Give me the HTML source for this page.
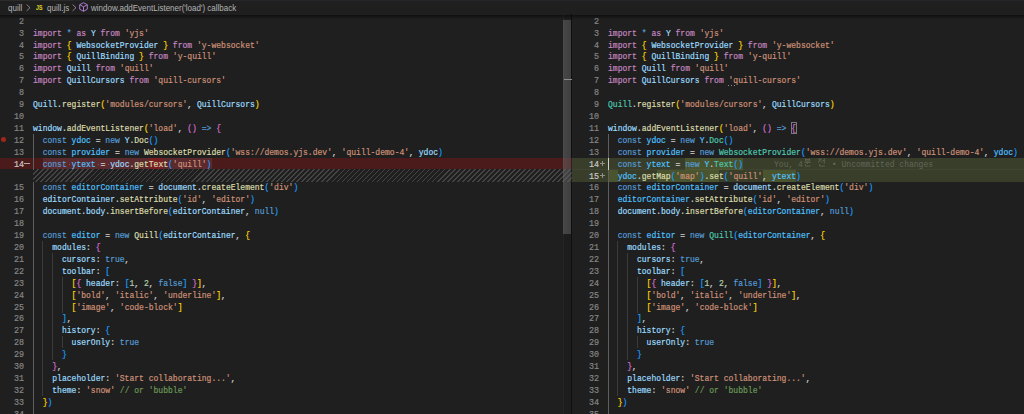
<!DOCTYPE html>
<html><head><meta charset="utf-8"><style>
html,body{margin:0;padding:0;}
body{width:1024px;height:414px;overflow:hidden;background:#1f1f1f;position:relative;font-family:"Liberation Mono",monospace;}
.a{position:absolute;}
.ln{position:absolute;white-space:pre;font-size:9.0px;line-height:11.91px;height:11.91px;transform-origin:0 0;margin-top:1.8px;-webkit-text-stroke:0.2px currentColor;}
.num{position:absolute;white-space:pre;font-size:9.0px;line-height:11.91px;color:#858585;text-align:right;width:30px;transform-origin:100% 0;transform:scaleX(0.93);margin-top:1.8px;-webkit-text-stroke:0.2px currentColor;}

.k{color:#c586c0}
.b{color:#569cd6}
.v{color:#9cdcfe}
.c{color:#4fc1ff}
.f{color:#dcdcaa}
.s{color:#ce9178}
.t{color:#4ec9b0}
.n{color:#b5cea8}
.o{color:#d4d4d4}
.g{color:#ffd700}
.p{color:#da70d6}
.u{color:#179fff}
.m{color:#6a9955}

.hatch{background-image:repeating-linear-gradient(-45deg,#1f1f1f 0px,#1f1f1f 2.45px,#444444 2.45px,#444444 3.55px);}
</style></head><body>

<div class="a" style="left:0;top:157.82px;width:572px;height:11.10px;background:#4b1a1a"></div>
<div class="a" style="left:42.94px;top:157.82px;width:168.70px;height:11.10px;background:#5a2a2e"></div>
<div class="a" style="left:148.98px;top:157.82px;width:14.46px;height:11.10px;background:#7a1e22"></div>
<div class="a hatch" style="left:33px;top:168.92px;width:539px;height:12.72px"></div>
<div class="a" style="left:572px;top:157.82px;width:452px;height:23.82px;background:#383e2a"></div>
<div class="a" style="left:685.42px;top:157.82px;width:57.84px;height:11.91px;background:#4a5530"></div>
<div class="a" style="left:608.30px;top:169.73px;width:9.64px;height:11.91px;background:#4a5530"></div>
<div class="a" style="left:656.50px;top:169.73px;width:62.66px;height:11.91px;background:#4a5530"></div>
<div class="a" style="left:762.54px;top:169.73px;width:33.74px;height:11.91px;background:#4a5530"></div>
<div class="a" style="left:572px;top:168.5px;width:452px;height:0.7px;background:rgba(255,255,255,0.04)"></div>
<div class="a" style="left:69.04px;top:164.22px;width:1px;height:1px;background:#7c5c60"></div>
<div class="a" style="left:97.96px;top:164.22px;width:1px;height:1px;background:#7c5c60"></div>
<div class="a" style="left:107.60px;top:164.22px;width:1px;height:1px;background:#7c5c60"></div>
<div class="a" style="left:0px;top:14px;width:563px;height:400px;overflow:hidden">
<div class="num" style="left:-6.00px;top:0.90px">2</div>
<div class="num" style="left:-6.00px;top:12.81px">3</div>
<div class="ln" style="left:33.30px;top:12.81px;transform:scaleX(0.8926)"><span class="k">import</span><span class="o"> </span><span class="b">*</span><span class="o"> </span><span class="k">as</span><span class="o"> </span><span class="v">Y</span><span class="o"> </span><span class="k">from</span><span class="o"> </span><span class="s">&#x27;yjs&#x27;</span></div>
<div class="num" style="left:-6.00px;top:24.72px">4</div>
<div class="ln" style="left:33.30px;top:24.72px;transform:scaleX(0.8926)"><span class="k">import</span><span class="o"> </span><span class="g">{</span><span class="o"> </span><span class="v">WebsocketProvider</span><span class="o"> </span><span class="g">}</span><span class="o"> </span><span class="k">from</span><span class="o"> </span><span class="s">&#x27;y-websocket&#x27;</span></div>
<div class="num" style="left:-6.00px;top:36.63px">5</div>
<div class="ln" style="left:33.30px;top:36.63px;transform:scaleX(0.8926)"><span class="k">import</span><span class="o"> </span><span class="g">{</span><span class="o"> </span><span class="v">QuillBinding</span><span class="o"> </span><span class="g">}</span><span class="o"> </span><span class="k">from</span><span class="o"> </span><span class="s">&#x27;y-quill&#x27;</span></div>
<div class="num" style="left:-6.00px;top:48.54px">6</div>
<div class="ln" style="left:33.30px;top:48.54px;transform:scaleX(0.8926)"><span class="k">import</span><span class="o"> </span><span class="v">Quill</span><span class="o"> </span><span class="k">from</span><span class="o"> </span><span class="s">&#x27;quill&#x27;</span></div>
<div class="num" style="left:-6.00px;top:60.45px">7</div>
<div class="ln" style="left:33.30px;top:60.45px;transform:scaleX(0.8926)"><span class="k">import</span><span class="o"> </span><span class="v">QuillCursors</span><span class="o"> </span><span class="k">from</span><span class="o"> </span><span class="s">&#x27;quill-cursors&#x27;</span></div>
<div class="num" style="left:-6.00px;top:72.36px">8</div>
<div class="num" style="left:-6.00px;top:84.27px">9</div>
<div class="ln" style="left:33.30px;top:84.27px;transform:scaleX(0.8926)"><span class="v">Quill</span><span class="o">.</span><span class="f">register</span><span class="g">(</span><span class="s">&#x27;modules/cursors&#x27;</span><span class="o">, </span><span class="v">QuillCursors</span><span class="g">)</span></div>
<div class="num" style="left:-6.00px;top:96.18px">10</div>
<div class="num" style="left:-6.00px;top:108.09px">11</div>
<div class="ln" style="left:33.30px;top:108.09px;transform:scaleX(0.8926)"><span class="v">window</span><span class="o">.</span><span class="f">addEventListener</span><span class="g">(</span><span class="s">&#x27;load&#x27;</span><span class="o">, </span><span class="p">()</span><span class="o"> </span><span class="b">=&gt;</span><span class="o"> </span><span class="p">{</span></div>
<div class="a" style="left:33.00px;top:120.00px;width:1px;height:11.96px;background:#5e5e5e"></div>
<div class="num" style="left:-6.00px;top:120.00px">12</div>
<div class="ln" style="left:33.30px;top:120.00px;transform:scaleX(0.8926)"><span class="o">  </span><span class="b">const</span><span class="o"> </span><span class="c">ydoc</span><span class="o"> = </span><span class="b">new</span><span class="o"> </span><span class="v">Y</span><span class="o">.</span><span class="f">Doc</span><span class="u">()</span></div>
<div class="a" style="left:33.00px;top:131.91px;width:1px;height:11.96px;background:#5e5e5e"></div>
<div class="num" style="left:-6.00px;top:131.91px">13</div>
<div class="ln" style="left:33.30px;top:131.91px;transform:scaleX(0.8926)"><span class="o">  </span><span class="b">const</span><span class="o"> </span><span class="c">provider</span><span class="o"> = </span><span class="b">new</span><span class="o"> </span><span class="f">WebsocketProvider</span><span class="u">(</span><span class="s">&#x27;wss://demos.yjs.dev&#x27;</span><span class="o">, </span><span class="s">&#x27;quill-demo-4&#x27;</span><span class="o">, </span><span class="v">ydoc</span><span class="u">)</span></div>
<div class="a" style="left:33.00px;top:143.82px;width:1px;height:11.96px;background:#5e5e5e"></div>
<div class="num" style="left:-6.00px;top:143.82px;color:#c8c8c8">14</div>
<div class="ln" style="left:33.30px;top:143.82px;transform:scaleX(0.8926)"><span class="o">  </span><span class="b">const</span><span class="o"> </span><span class="c">ytext</span><span class="o"> = </span><span class="v">ydoc</span><span class="o">.</span><span class="f">getText</span><span class="u">(</span><span class="s">&#x27;quill&#x27;</span><span class="u">)</span></div>
<div class="a" style="left:33.00px;top:167.64px;width:1px;height:11.96px;background:#5e5e5e"></div>
<div class="num" style="left:-6.00px;top:167.64px">15</div>
<div class="ln" style="left:33.30px;top:167.64px;transform:scaleX(0.8926)"><span class="o">  </span><span class="b">const</span><span class="o"> </span><span class="c">editorContainer</span><span class="o"> = </span><span class="v">document</span><span class="o">.</span><span class="f">createElement</span><span class="u">(</span><span class="s">&#x27;div&#x27;</span><span class="u">)</span></div>
<div class="a" style="left:33.00px;top:179.55px;width:1px;height:11.96px;background:#5e5e5e"></div>
<div class="num" style="left:-6.00px;top:179.55px">16</div>
<div class="ln" style="left:33.30px;top:179.55px;transform:scaleX(0.8926)"><span class="o">  </span><span class="v">editorContainer</span><span class="o">.</span><span class="f">setAttribute</span><span class="u">(</span><span class="s">&#x27;id&#x27;</span><span class="o">, </span><span class="s">&#x27;editor&#x27;</span><span class="u">)</span></div>
<div class="a" style="left:33.00px;top:191.46px;width:1px;height:11.96px;background:#5e5e5e"></div>
<div class="num" style="left:-6.00px;top:191.46px">17</div>
<div class="ln" style="left:33.30px;top:191.46px;transform:scaleX(0.8926)"><span class="o">  </span><span class="v">document</span><span class="o">.</span><span class="v">body</span><span class="o">.</span><span class="f">insertBefore</span><span class="u">(</span><span class="v">editorContainer</span><span class="o">, </span><span class="b">null</span><span class="u">)</span></div>
<div class="a" style="left:33.00px;top:203.37px;width:1px;height:11.96px;background:#5e5e5e"></div>
<div class="num" style="left:-6.00px;top:203.37px">18</div>
<div class="a" style="left:33.00px;top:215.28px;width:1px;height:11.96px;background:#5e5e5e"></div>
<div class="num" style="left:-6.00px;top:215.28px">19</div>
<div class="ln" style="left:33.30px;top:215.28px;transform:scaleX(0.8926)"><span class="o">  </span><span class="b">const</span><span class="o"> </span><span class="c">editor</span><span class="o"> = </span><span class="b">new</span><span class="o"> </span><span class="f">Quill</span><span class="u">(</span><span class="v">editorContainer</span><span class="o">, </span><span class="g">{</span></div>
<div class="a" style="left:33.00px;top:227.19px;width:1px;height:11.96px;background:#5e5e5e"></div>
<div class="a" style="left:42.00px;top:227.19px;width:1px;height:11.96px;background:#3b3b3b"></div>
<div class="num" style="left:-6.00px;top:227.19px">20</div>
<div class="ln" style="left:33.30px;top:227.19px;transform:scaleX(0.8926)"><span class="o">    </span><span class="v">modules</span><span class="o">: </span><span class="p">{</span></div>
<div class="a" style="left:33.00px;top:239.10px;width:1px;height:11.96px;background:#5e5e5e"></div>
<div class="a" style="left:42.00px;top:239.10px;width:1px;height:11.96px;background:#3b3b3b"></div>
<div class="a" style="left:52.00px;top:239.10px;width:1px;height:11.96px;background:#3b3b3b"></div>
<div class="num" style="left:-6.00px;top:239.10px">21</div>
<div class="ln" style="left:33.30px;top:239.10px;transform:scaleX(0.8926)"><span class="o">      </span><span class="v">cursors</span><span class="o">: </span><span class="b">true</span><span class="o">,</span></div>
<div class="a" style="left:33.00px;top:251.01px;width:1px;height:11.96px;background:#5e5e5e"></div>
<div class="a" style="left:42.00px;top:251.01px;width:1px;height:11.96px;background:#3b3b3b"></div>
<div class="a" style="left:52.00px;top:251.01px;width:1px;height:11.96px;background:#3b3b3b"></div>
<div class="num" style="left:-6.00px;top:251.01px">22</div>
<div class="ln" style="left:33.30px;top:251.01px;transform:scaleX(0.8926)"><span class="o">      </span><span class="v">toolbar</span><span class="o">: </span><span class="u">[</span></div>
<div class="a" style="left:33.00px;top:262.92px;width:1px;height:11.96px;background:#5e5e5e"></div>
<div class="a" style="left:42.00px;top:262.92px;width:1px;height:11.96px;background:#3b3b3b"></div>
<div class="a" style="left:52.00px;top:262.92px;width:1px;height:11.96px;background:#3b3b3b"></div>
<div class="a" style="left:62.00px;top:262.92px;width:1px;height:11.96px;background:#3b3b3b"></div>
<div class="num" style="left:-6.00px;top:262.92px">23</div>
<div class="ln" style="left:33.30px;top:262.92px;transform:scaleX(0.8926)"><span class="o">        </span><span class="g">[</span><span class="p">{</span><span class="o"> </span><span class="v">header</span><span class="o">: </span><span class="u">[</span><span class="n">1</span><span class="o">, </span><span class="n">2</span><span class="o">, </span><span class="b">false</span><span class="u">]</span><span class="o"> </span><span class="p">}</span><span class="g">]</span><span class="o">,</span></div>
<div class="a" style="left:33.00px;top:274.83px;width:1px;height:11.96px;background:#5e5e5e"></div>
<div class="a" style="left:42.00px;top:274.83px;width:1px;height:11.96px;background:#3b3b3b"></div>
<div class="a" style="left:52.00px;top:274.83px;width:1px;height:11.96px;background:#3b3b3b"></div>
<div class="a" style="left:62.00px;top:274.83px;width:1px;height:11.96px;background:#3b3b3b"></div>
<div class="num" style="left:-6.00px;top:274.83px">24</div>
<div class="ln" style="left:33.30px;top:274.83px;transform:scaleX(0.8926)"><span class="o">        </span><span class="g">[</span><span class="s">&#x27;bold&#x27;</span><span class="o">, </span><span class="s">&#x27;italic&#x27;</span><span class="o">, </span><span class="s">&#x27;underline&#x27;</span><span class="g">]</span><span class="o">,</span></div>
<div class="a" style="left:33.00px;top:286.74px;width:1px;height:11.96px;background:#5e5e5e"></div>
<div class="a" style="left:42.00px;top:286.74px;width:1px;height:11.96px;background:#3b3b3b"></div>
<div class="a" style="left:52.00px;top:286.74px;width:1px;height:11.96px;background:#3b3b3b"></div>
<div class="a" style="left:62.00px;top:286.74px;width:1px;height:11.96px;background:#3b3b3b"></div>
<div class="num" style="left:-6.00px;top:286.74px">25</div>
<div class="ln" style="left:33.30px;top:286.74px;transform:scaleX(0.8926)"><span class="o">        </span><span class="g">[</span><span class="s">&#x27;image&#x27;</span><span class="o">, </span><span class="s">&#x27;code-block&#x27;</span><span class="g">]</span></div>
<div class="a" style="left:33.00px;top:298.65px;width:1px;height:11.96px;background:#5e5e5e"></div>
<div class="a" style="left:42.00px;top:298.65px;width:1px;height:11.96px;background:#3b3b3b"></div>
<div class="a" style="left:52.00px;top:298.65px;width:1px;height:11.96px;background:#3b3b3b"></div>
<div class="num" style="left:-6.00px;top:298.65px">26</div>
<div class="ln" style="left:33.30px;top:298.65px;transform:scaleX(0.8926)"><span class="o">      </span><span class="u">]</span><span class="o">,</span></div>
<div class="a" style="left:33.00px;top:310.56px;width:1px;height:11.96px;background:#5e5e5e"></div>
<div class="a" style="left:42.00px;top:310.56px;width:1px;height:11.96px;background:#3b3b3b"></div>
<div class="a" style="left:52.00px;top:310.56px;width:1px;height:11.96px;background:#3b3b3b"></div>
<div class="num" style="left:-6.00px;top:310.56px">27</div>
<div class="ln" style="left:33.30px;top:310.56px;transform:scaleX(0.8926)"><span class="o">      </span><span class="v">history</span><span class="o">: </span><span class="u">{</span></div>
<div class="a" style="left:33.00px;top:322.47px;width:1px;height:11.96px;background:#5e5e5e"></div>
<div class="a" style="left:42.00px;top:322.47px;width:1px;height:11.96px;background:#3b3b3b"></div>
<div class="a" style="left:52.00px;top:322.47px;width:1px;height:11.96px;background:#3b3b3b"></div>
<div class="a" style="left:62.00px;top:322.47px;width:1px;height:11.96px;background:#3b3b3b"></div>
<div class="num" style="left:-6.00px;top:322.47px">28</div>
<div class="ln" style="left:33.30px;top:322.47px;transform:scaleX(0.8926)"><span class="o">        </span><span class="v">userOnly</span><span class="o">: </span><span class="b">true</span></div>
<div class="a" style="left:33.00px;top:334.38px;width:1px;height:11.96px;background:#5e5e5e"></div>
<div class="a" style="left:42.00px;top:334.38px;width:1px;height:11.96px;background:#3b3b3b"></div>
<div class="a" style="left:52.00px;top:334.38px;width:1px;height:11.96px;background:#3b3b3b"></div>
<div class="num" style="left:-6.00px;top:334.38px">29</div>
<div class="ln" style="left:33.30px;top:334.38px;transform:scaleX(0.8926)"><span class="o">      </span><span class="u">}</span></div>
<div class="a" style="left:33.00px;top:346.29px;width:1px;height:11.96px;background:#5e5e5e"></div>
<div class="a" style="left:42.00px;top:346.29px;width:1px;height:11.96px;background:#3b3b3b"></div>
<div class="num" style="left:-6.00px;top:346.29px">30</div>
<div class="ln" style="left:33.30px;top:346.29px;transform:scaleX(0.8926)"><span class="o">    </span><span class="p">}</span><span class="o">,</span></div>
<div class="a" style="left:33.00px;top:358.20px;width:1px;height:11.96px;background:#5e5e5e"></div>
<div class="a" style="left:42.00px;top:358.20px;width:1px;height:11.96px;background:#3b3b3b"></div>
<div class="num" style="left:-6.00px;top:358.20px">31</div>
<div class="ln" style="left:33.30px;top:358.20px;transform:scaleX(0.8926)"><span class="o">    </span><span class="v">placeholder</span><span class="o">: </span><span class="s">&#x27;Start collaborating...&#x27;</span><span class="o">,</span></div>
<div class="a" style="left:33.00px;top:370.11px;width:1px;height:11.96px;background:#5e5e5e"></div>
<div class="a" style="left:42.00px;top:370.11px;width:1px;height:11.96px;background:#3b3b3b"></div>
<div class="num" style="left:-6.00px;top:370.11px">32</div>
<div class="ln" style="left:33.30px;top:370.11px;transform:scaleX(0.8926)"><span class="o">    </span><span class="v">theme</span><span class="o">: </span><span class="s">&#x27;snow&#x27;</span><span class="o"> </span><span class="m">// or &#x27;bubble&#x27;</span></div>
<div class="a" style="left:33.00px;top:382.02px;width:1px;height:11.96px;background:#5e5e5e"></div>
<div class="num" style="left:-6.00px;top:382.02px">33</div>
<div class="ln" style="left:33.30px;top:382.02px;transform:scaleX(0.8926)"><span class="o">  </span><span class="g">}</span><span class="u">)</span></div>
<div class="a" style="left:33.00px;top:393.93px;width:1px;height:11.96px;background:#5e5e5e"></div>
<div class="num" style="left:-6.00px;top:393.93px">34</div>
<div class="a" style="left:33.00px;top:405.84px;width:1px;height:11.96px;background:#5e5e5e"></div>
<div class="num" style="left:-6.00px;top:405.84px">35</div>
<div class="ln" style="left:33.30px;top:405.84px;transform:scaleX(0.8926)"><span class="o">  </span><span class="b">new</span><span class="o"> </span><span class="f">QuillBinding</span><span class="u">(</span><span class="c">ytext</span><span class="o">, </span><span class="c">editor</span><span class="o">, </span><span class="c">provider</span><span class="o">.</span><span class="v">awareness</span><span class="u">)</span></div>
</div>
<div class="a" style="left:572px;top:14px;width:452px;height:400px;overflow:hidden">
<div class="num" style="left:-3.50px;top:0.90px">2</div>
<div class="num" style="left:-3.50px;top:12.81px">3</div>
<div class="ln" style="left:36.30px;top:12.81px;transform:scaleX(0.8926)"><span class="k">import</span><span class="o"> </span><span class="b">*</span><span class="o"> </span><span class="k">as</span><span class="o"> </span><span class="v">Y</span><span class="o"> </span><span class="k">from</span><span class="o"> </span><span class="s">&#x27;yjs&#x27;</span></div>
<div class="num" style="left:-3.50px;top:24.72px">4</div>
<div class="ln" style="left:36.30px;top:24.72px;transform:scaleX(0.8926)"><span class="k">import</span><span class="o"> </span><span class="g">{</span><span class="o"> </span><span class="v">WebsocketProvider</span><span class="o"> </span><span class="g">}</span><span class="o"> </span><span class="k">from</span><span class="o"> </span><span class="s">&#x27;y-websocket&#x27;</span></div>
<div class="num" style="left:-3.50px;top:36.63px">5</div>
<div class="ln" style="left:36.30px;top:36.63px;transform:scaleX(0.8926)"><span class="k">import</span><span class="o"> </span><span class="g">{</span><span class="o"> </span><span class="v">QuillBinding</span><span class="o"> </span><span class="g">}</span><span class="o"> </span><span class="k">from</span><span class="o"> </span><span class="s">&#x27;y-quill&#x27;</span></div>
<div class="num" style="left:-3.50px;top:48.54px">6</div>
<div class="ln" style="left:36.30px;top:48.54px;transform:scaleX(0.8926)"><span class="k">import</span><span class="o"> </span><span class="v">Quill</span><span class="o"> </span><span class="k">from</span><span class="o"> </span><span class="s">&#x27;quill&#x27;</span></div>
<div class="num" style="left:-3.50px;top:60.45px">7</div>
<div class="ln" style="left:36.30px;top:60.45px;transform:scaleX(0.8926)"><span class="k">import</span><span class="o"> </span><span class="v">QuillCursors</span><span class="o"> </span><span class="k">from</span><span class="o"> </span><span class="s">&#x27;quill-cursors&#x27;</span></div>
<div class="num" style="left:-3.50px;top:72.36px">8</div>
<div class="num" style="left:-3.50px;top:84.27px">9</div>
<div class="ln" style="left:36.30px;top:84.27px;transform:scaleX(0.8926)"><span class="t">Quill</span><span class="o">.</span><span class="f">register</span><span class="g">(</span><span class="s">&#x27;modules/cursors&#x27;</span><span class="o">, </span><span class="v">QuillCursors</span><span class="g">)</span></div>
<div class="num" style="left:-3.50px;top:96.18px">10</div>
<div class="num" style="left:-3.50px;top:108.09px">11</div>
<div class="ln" style="left:36.30px;top:108.09px;transform:scaleX(0.8926)"><span class="v">window</span><span class="o">.</span><span class="f">addEventListener</span><span class="g">(</span><span class="s">&#x27;load&#x27;</span><span class="o">, </span><span class="p">()</span><span class="o"> </span><span class="b">=&gt;</span><span class="o"> </span><span class="p">{</span></div>
<div class="a" style="left:36.00px;top:120.00px;width:1px;height:11.96px;background:#5e5e5e"></div>
<div class="num" style="left:-3.50px;top:120.00px">12</div>
<div class="ln" style="left:36.30px;top:120.00px;transform:scaleX(0.8926)"><span class="o">  </span><span class="b">const</span><span class="o"> </span><span class="c">ydoc</span><span class="o"> = </span><span class="b">new</span><span class="o"> </span><span class="c">Y</span><span class="o">.</span><span class="t">Doc</span><span class="u">()</span></div>
<div class="a" style="left:36.00px;top:131.91px;width:1px;height:11.96px;background:#5e5e5e"></div>
<div class="num" style="left:-3.50px;top:131.91px">13</div>
<div class="ln" style="left:36.30px;top:131.91px;transform:scaleX(0.8926)"><span class="o">  </span><span class="b">const</span><span class="o"> </span><span class="c">provider</span><span class="o"> = </span><span class="b">new</span><span class="o"> </span><span class="t">WebsocketProvider</span><span class="u">(</span><span class="s">&#x27;wss://demos.yjs.dev&#x27;</span><span class="o">, </span><span class="s">&#x27;quill-demo-4&#x27;</span><span class="o">, </span><span class="c">ydoc</span><span class="u">)</span></div>
<div class="a" style="left:36.00px;top:143.82px;width:1px;height:11.96px;background:#5e5e5e"></div>
<div class="num" style="left:-3.50px;top:143.82px;color:#c8c8c8">14</div>
<div class="ln" style="left:36.30px;top:143.82px;transform:scaleX(0.8926)"><span class="o">  </span><span class="b">const</span><span class="o"> </span><span class="c">ytext</span><span class="o"> = </span><span class="b">new</span><span class="o"> </span><span class="c">Y</span><span class="o">.</span><span class="t">Text</span><span class="u">()</span></div>
<div class="a" style="left:36.00px;top:155.73px;width:1px;height:11.96px;background:#5e5e5e"></div>
<div class="num" style="left:-3.50px;top:155.73px;color:#c8c8c8">15</div>
<div class="ln" style="left:36.30px;top:155.73px;transform:scaleX(0.8926)"><span class="o">  </span><span class="c">ydoc</span><span class="o">.</span><span class="f">getMap</span><span class="u">(</span><span class="s">&#x27;map&#x27;</span><span class="u">)</span><span class="o">.</span><span class="f">set</span><span class="u">(</span><span class="s">&#x27;quill&#x27;</span><span class="o">, </span><span class="c">ytext</span><span class="u">)</span></div>
<div class="a" style="left:36.00px;top:167.64px;width:1px;height:11.96px;background:#5e5e5e"></div>
<div class="num" style="left:-3.50px;top:167.64px">16</div>
<div class="ln" style="left:36.30px;top:167.64px;transform:scaleX(0.8926)"><span class="o">  </span><span class="b">const</span><span class="o"> </span><span class="c">editorContainer</span><span class="o"> = </span><span class="v">document</span><span class="o">.</span><span class="f">createElement</span><span class="u">(</span><span class="s">&#x27;div&#x27;</span><span class="u">)</span></div>
<div class="a" style="left:36.00px;top:179.55px;width:1px;height:11.96px;background:#5e5e5e"></div>
<div class="num" style="left:-3.50px;top:179.55px">17</div>
<div class="ln" style="left:36.30px;top:179.55px;transform:scaleX(0.8926)"><span class="o">  </span><span class="c">editorContainer</span><span class="o">.</span><span class="f">setAttribute</span><span class="u">(</span><span class="s">&#x27;id&#x27;</span><span class="o">, </span><span class="s">&#x27;editor&#x27;</span><span class="u">)</span></div>
<div class="a" style="left:36.00px;top:191.46px;width:1px;height:11.96px;background:#5e5e5e"></div>
<div class="num" style="left:-3.50px;top:191.46px">18</div>
<div class="ln" style="left:36.30px;top:191.46px;transform:scaleX(0.8926)"><span class="o">  </span><span class="v">document</span><span class="o">.</span><span class="v">body</span><span class="o">.</span><span class="f">insertBefore</span><span class="u">(</span><span class="c">editorContainer</span><span class="o">, </span><span class="b">null</span><span class="u">)</span></div>
<div class="a" style="left:36.00px;top:203.37px;width:1px;height:11.96px;background:#5e5e5e"></div>
<div class="num" style="left:-3.50px;top:203.37px">19</div>
<div class="a" style="left:36.00px;top:215.28px;width:1px;height:11.96px;background:#5e5e5e"></div>
<div class="num" style="left:-3.50px;top:215.28px">20</div>
<div class="ln" style="left:36.30px;top:215.28px;transform:scaleX(0.8926)"><span class="o">  </span><span class="b">const</span><span class="o"> </span><span class="c">editor</span><span class="o"> = </span><span class="b">new</span><span class="o"> </span><span class="t">Quill</span><span class="u">(</span><span class="c">editorContainer</span><span class="o">, </span><span class="g">{</span></div>
<div class="a" style="left:36.00px;top:227.19px;width:1px;height:11.96px;background:#5e5e5e"></div>
<div class="a" style="left:45.00px;top:227.19px;width:1px;height:11.96px;background:#3b3b3b"></div>
<div class="num" style="left:-3.50px;top:227.19px">21</div>
<div class="ln" style="left:36.30px;top:227.19px;transform:scaleX(0.8926)"><span class="o">    </span><span class="v">modules</span><span class="o">: </span><span class="p">{</span></div>
<div class="a" style="left:36.00px;top:239.10px;width:1px;height:11.96px;background:#5e5e5e"></div>
<div class="a" style="left:45.00px;top:239.10px;width:1px;height:11.96px;background:#3b3b3b"></div>
<div class="a" style="left:55.00px;top:239.10px;width:1px;height:11.96px;background:#3b3b3b"></div>
<div class="num" style="left:-3.50px;top:239.10px">22</div>
<div class="ln" style="left:36.30px;top:239.10px;transform:scaleX(0.8926)"><span class="o">      </span><span class="v">cursors</span><span class="o">: </span><span class="b">true</span><span class="o">,</span></div>
<div class="a" style="left:36.00px;top:251.01px;width:1px;height:11.96px;background:#5e5e5e"></div>
<div class="a" style="left:45.00px;top:251.01px;width:1px;height:11.96px;background:#3b3b3b"></div>
<div class="a" style="left:55.00px;top:251.01px;width:1px;height:11.96px;background:#3b3b3b"></div>
<div class="num" style="left:-3.50px;top:251.01px">23</div>
<div class="ln" style="left:36.30px;top:251.01px;transform:scaleX(0.8926)"><span class="o">      </span><span class="v">toolbar</span><span class="o">: </span><span class="u">[</span></div>
<div class="a" style="left:36.00px;top:262.92px;width:1px;height:11.96px;background:#5e5e5e"></div>
<div class="a" style="left:45.00px;top:262.92px;width:1px;height:11.96px;background:#3b3b3b"></div>
<div class="a" style="left:55.00px;top:262.92px;width:1px;height:11.96px;background:#3b3b3b"></div>
<div class="a" style="left:65.00px;top:262.92px;width:1px;height:11.96px;background:#3b3b3b"></div>
<div class="num" style="left:-3.50px;top:262.92px">24</div>
<div class="ln" style="left:36.30px;top:262.92px;transform:scaleX(0.8926)"><span class="o">        </span><span class="g">[</span><span class="p">{</span><span class="o"> </span><span class="v">header</span><span class="o">: </span><span class="u">[</span><span class="n">1</span><span class="o">, </span><span class="n">2</span><span class="o">, </span><span class="b">false</span><span class="u">]</span><span class="o"> </span><span class="p">}</span><span class="g">]</span><span class="o">,</span></div>
<div class="a" style="left:36.00px;top:274.83px;width:1px;height:11.96px;background:#5e5e5e"></div>
<div class="a" style="left:45.00px;top:274.83px;width:1px;height:11.96px;background:#3b3b3b"></div>
<div class="a" style="left:55.00px;top:274.83px;width:1px;height:11.96px;background:#3b3b3b"></div>
<div class="a" style="left:65.00px;top:274.83px;width:1px;height:11.96px;background:#3b3b3b"></div>
<div class="num" style="left:-3.50px;top:274.83px">25</div>
<div class="ln" style="left:36.30px;top:274.83px;transform:scaleX(0.8926)"><span class="o">        </span><span class="g">[</span><span class="s">&#x27;bold&#x27;</span><span class="o">, </span><span class="s">&#x27;italic&#x27;</span><span class="o">, </span><span class="s">&#x27;underline&#x27;</span><span class="g">]</span><span class="o">,</span></div>
<div class="a" style="left:36.00px;top:286.74px;width:1px;height:11.96px;background:#5e5e5e"></div>
<div class="a" style="left:45.00px;top:286.74px;width:1px;height:11.96px;background:#3b3b3b"></div>
<div class="a" style="left:55.00px;top:286.74px;width:1px;height:11.96px;background:#3b3b3b"></div>
<div class="a" style="left:65.00px;top:286.74px;width:1px;height:11.96px;background:#3b3b3b"></div>
<div class="num" style="left:-3.50px;top:286.74px">26</div>
<div class="ln" style="left:36.30px;top:286.74px;transform:scaleX(0.8926)"><span class="o">        </span><span class="g">[</span><span class="s">&#x27;image&#x27;</span><span class="o">, </span><span class="s">&#x27;code-block&#x27;</span><span class="g">]</span></div>
<div class="a" style="left:36.00px;top:298.65px;width:1px;height:11.96px;background:#5e5e5e"></div>
<div class="a" style="left:45.00px;top:298.65px;width:1px;height:11.96px;background:#3b3b3b"></div>
<div class="a" style="left:55.00px;top:298.65px;width:1px;height:11.96px;background:#3b3b3b"></div>
<div class="num" style="left:-3.50px;top:298.65px">27</div>
<div class="ln" style="left:36.30px;top:298.65px;transform:scaleX(0.8926)"><span class="o">      </span><span class="u">]</span><span class="o">,</span></div>
<div class="a" style="left:36.00px;top:310.56px;width:1px;height:11.96px;background:#5e5e5e"></div>
<div class="a" style="left:45.00px;top:310.56px;width:1px;height:11.96px;background:#3b3b3b"></div>
<div class="a" style="left:55.00px;top:310.56px;width:1px;height:11.96px;background:#3b3b3b"></div>
<div class="num" style="left:-3.50px;top:310.56px">28</div>
<div class="ln" style="left:36.30px;top:310.56px;transform:scaleX(0.8926)"><span class="o">      </span><span class="v">history</span><span class="o">: </span><span class="u">{</span></div>
<div class="a" style="left:36.00px;top:322.47px;width:1px;height:11.96px;background:#5e5e5e"></div>
<div class="a" style="left:45.00px;top:322.47px;width:1px;height:11.96px;background:#3b3b3b"></div>
<div class="a" style="left:55.00px;top:322.47px;width:1px;height:11.96px;background:#3b3b3b"></div>
<div class="a" style="left:65.00px;top:322.47px;width:1px;height:11.96px;background:#3b3b3b"></div>
<div class="num" style="left:-3.50px;top:322.47px">29</div>
<div class="ln" style="left:36.30px;top:322.47px;transform:scaleX(0.8926)"><span class="o">        </span><span class="v">userOnly</span><span class="o">: </span><span class="b">true</span></div>
<div class="a" style="left:36.00px;top:334.38px;width:1px;height:11.96px;background:#5e5e5e"></div>
<div class="a" style="left:45.00px;top:334.38px;width:1px;height:11.96px;background:#3b3b3b"></div>
<div class="a" style="left:55.00px;top:334.38px;width:1px;height:11.96px;background:#3b3b3b"></div>
<div class="num" style="left:-3.50px;top:334.38px">30</div>
<div class="ln" style="left:36.30px;top:334.38px;transform:scaleX(0.8926)"><span class="o">      </span><span class="u">}</span></div>
<div class="a" style="left:36.00px;top:346.29px;width:1px;height:11.96px;background:#5e5e5e"></div>
<div class="a" style="left:45.00px;top:346.29px;width:1px;height:11.96px;background:#3b3b3b"></div>
<div class="num" style="left:-3.50px;top:346.29px">31</div>
<div class="ln" style="left:36.30px;top:346.29px;transform:scaleX(0.8926)"><span class="o">    </span><span class="p">}</span><span class="o">,</span></div>
<div class="a" style="left:36.00px;top:358.20px;width:1px;height:11.96px;background:#5e5e5e"></div>
<div class="a" style="left:45.00px;top:358.20px;width:1px;height:11.96px;background:#3b3b3b"></div>
<div class="num" style="left:-3.50px;top:358.20px">32</div>
<div class="ln" style="left:36.30px;top:358.20px;transform:scaleX(0.8926)"><span class="o">    </span><span class="v">placeholder</span><span class="o">: </span><span class="s">&#x27;Start collaborating...&#x27;</span><span class="o">,</span></div>
<div class="a" style="left:36.00px;top:370.11px;width:1px;height:11.96px;background:#5e5e5e"></div>
<div class="a" style="left:45.00px;top:370.11px;width:1px;height:11.96px;background:#3b3b3b"></div>
<div class="num" style="left:-3.50px;top:370.11px">33</div>
<div class="ln" style="left:36.30px;top:370.11px;transform:scaleX(0.8926)"><span class="o">    </span><span class="v">theme</span><span class="o">: </span><span class="s">&#x27;snow&#x27;</span><span class="o"> </span><span class="m">// or &#x27;bubble&#x27;</span></div>
<div class="a" style="left:36.00px;top:382.02px;width:1px;height:11.96px;background:#5e5e5e"></div>
<div class="num" style="left:-3.50px;top:382.02px">34</div>
<div class="ln" style="left:36.30px;top:382.02px;transform:scaleX(0.8926)"><span class="o">  </span><span class="g">}</span><span class="u">)</span></div>
<div class="a" style="left:36.00px;top:393.93px;width:1px;height:11.96px;background:#5e5e5e"></div>
<div class="num" style="left:-3.50px;top:393.93px">35</div>
<div class="a" style="left:36.00px;top:405.84px;width:1px;height:11.96px;background:#5e5e5e"></div>
<div class="num" style="left:-3.50px;top:405.84px">36</div>
<div class="ln" style="left:36.30px;top:405.84px;transform:scaleX(0.8926)"><span class="o">  </span><span class="b">new</span><span class="o"> </span><span class="f">QuillBinding</span><span class="u">(</span><span class="c">ytext</span><span class="o">, </span><span class="c">editor</span><span class="o">, </span><span class="c">provider</span><span class="o">.</span><span class="v">awareness</span><span class="u">)</span></div>
</div>
<div class="a" style="left:0;top:0;width:1024px;height:14px;background:#1f1f1f"></div>
<div class="a" style="left:0;top:0;width:1024px;height:1px;background:#24262a"></div>
<div class="a" style="left:0;top:0;width:73px;height:1px;background:#2c2c2c"></div>
<div class="a" style="left:0;top:14.6px;width:1024px;height:4px;background:linear-gradient(#0f0f0f,rgba(0,0,0,0))"></div>
<div class="a" style="left:7.5px;top:2.9px;font-family:'Liberation Sans',sans-serif;font-size:8.6px;line-height:11px;color:#b4b4b4;white-space:pre;transform:scaleX(0.93);transform-origin:0 0">quill</div>
<div class="a" style="left:46.8px;top:2.9px;font-family:'Liberation Sans',sans-serif;font-size:8.6px;line-height:11px;color:#b4b4b4;white-space:pre;transform:scaleX(0.93);transform-origin:0 0">quill.js</div>
<div class="a" style="left:90.8px;top:2.9px;font-family:'Liberation Sans',sans-serif;font-size:8.6px;line-height:11px;color:#b4b4b4;white-space:pre;transform:scaleX(0.93);transform-origin:0 0">window.addEventListener('load') callback</div>
<svg class="a" style="left:25.6px;top:4px" width="5" height="8" viewBox="0 0 5 8"><polyline points="0.6,0.5 4,3.7 0.6,6.9" fill="none" stroke="#a8a8a8" stroke-width="0.75"/></svg>
<svg class="a" style="left:71.8px;top:4px" width="5" height="8" viewBox="0 0 5 8"><polyline points="0.6,0.5 4,3.7 0.6,6.9" fill="none" stroke="#a8a8a8" stroke-width="0.75"/></svg>
<div class="a" style="left:35.7px;top:4.0px;font-family:'Liberation Sans',sans-serif;font-weight:bold;font-size:7px;line-height:8px;color:#dccf1e;transform:scaleX(0.74);-webkit-text-stroke:0.12px #dccf1e;transform-origin:0 0">JS</div>
<svg class="a" style="left:79.4px;top:2.3px" width="9" height="10" viewBox="0 0 9 10"><g fill="none" stroke="#b180d7" stroke-width="0.95" stroke-linejoin="round"><path d="M4.5 0.7 L8.3 2.7 L8.3 7.2 L4.5 9.3 L0.7 7.2 L0.7 2.7 Z"/><path d="M0.9 2.8 L4.5 4.8 L8.1 2.8 M4.5 4.8 L4.5 9.1"/></g></svg>
<div class="a" style="left:563px;top:14px;width:9px;height:400px;background:rgba(20,20,20,0.15)"></div>
<div class="a" style="left:562.6px;top:14px;width:0.8px;height:400px;background:rgba(255,255,255,0.03)"></div>
<div class="a" style="left:571px;top:14px;width:1.2px;height:143.7px;background:rgba(0,0,0,0.45)"></div>
<div class="a" style="left:571px;top:181.6px;width:1.2px;height:232.4px;background:rgba(0,0,0,0.45)"></div>
<div class="a" style="left:563px;top:19.5px;width:8.4px;height:214.3px;background:linear-gradient(90deg,rgba(128,128,128,0.42),rgba(118,118,118,0.38))"></div>
<div class="a" style="left:563.5px;top:78.9px;width:8.5px;height:1.1px;background:#8c8c8c"></div>
<div class="a" style="left:1px;top:137.3px;width:5px;height:5px;border-radius:50%;background:#a0281a"></div>
<div class="a" style="left:24.2px;top:163.02px;width:6px;height:0.9px;background:#b8a8a8"></div>
<div class="a" style="left:599.5px;top:163.12px;width:5.4px;height:0.8px;background:#8e9184"></div>
<div class="a" style="left:601.8px;top:160.82px;width:0.8px;height:5.4px;background:#8e9184"></div>
<div class="a" style="left:599.5px;top:175.03px;width:5.4px;height:0.8px;background:#8e9184"></div>
<div class="a" style="left:601.8px;top:172.73px;width:0.8px;height:5.4px;background:#8e9184"></div>
<div class="a" style="left:607.8px;top:157.82px;width:1.3px;height:11.91px;background:#d0d0c8"></div>
<div class="a" style="left:791.16px;top:122.09px;width:5.42px;height:11.91px;border:0.8px solid #7a7a7a;box-sizing:border-box"></div>
<div class="a" style="left:774.2px;top:157.82px;font-size:9.0px;line-height:11.91px;margin-top:1.8px;white-space:pre;color:#63675a;transform:scaleX(0.8926);transform-origin:0 0">You, 4<span style="display:inline-block;width:10.80px"></span> <span style="display:inline-block;width:10.80px"></span> • Uncommitted changes</div>
<div class="a" style="left:728.3px;top:84.7px;width:1.2px;height:1.1px;background:#8a8a8a"></div>
<div class="a" style="left:731.2px;top:84.7px;width:1.2px;height:1.1px;background:#8a8a8a"></div>
<div class="a" style="left:734.1px;top:84.7px;width:1.2px;height:1.1px;background:#8a8a8a"></div>
<svg class="a" style="left:804.2px;top:158.4px" width="8" height="9" viewBox="0 0 8 9"><g fill="none" stroke="#63675a" stroke-width="0.8"><path d="M1.5 0.3V3.1M5.5 0.3V3.1M1.5 1.6H5.5M1.5 3.1H5.5M0.2 4.4H6.8M3.5 4.4V6M1.4 6V8.1H6.4"/></g></svg>
<svg class="a" style="left:817.8px;top:158.4px" width="8" height="9" viewBox="0 0 8 9"><g fill="none" stroke="#63675a" stroke-width="0.8"><path d="M0.4 1H3.8M2.1 1.1L0.3 4.6M2.1 2.3L4.2 4.6M6.3 0.2V5.6M4.6 2.6H6.3M1.6 6.1V8.1H6.8"/></g></svg>
</body></html>
